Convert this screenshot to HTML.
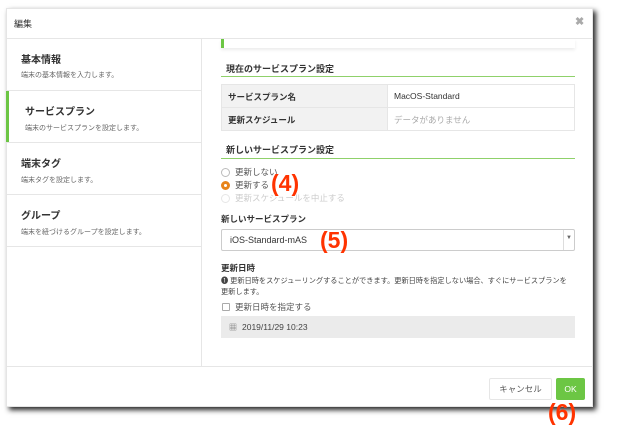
<!DOCTYPE html>
<html><head><meta charset="utf-8"><style>
*{box-sizing:border-box;margin:0;padding:0}
body{width:620px;height:441px;background:#fff;position:relative;font-family:"Liberation Sans","Noto Sans CJK JP",sans-serif;color:#333;overflow:hidden}
.a{position:absolute}
.dlg{left:6px;top:8px;width:587px;height:399px;background:#fff;box-shadow:3px 3px 5px rgba(0,0,0,.85);border:1px solid #e5e5e5}
.t{font-size:10px;font-weight:bold;color:#333}
.d{font-size:7px;color:#666}
.sep{height:1px;background:#e6e6e6}
.sec{font-size:9px;font-weight:bold;color:#333}
.gl{height:1px;background:#8fd16a}
.red{color:#ff3300;font-weight:bold;font-size:23px}
.rad{width:9px;height:9px;border:1px solid #bbb;border-radius:50%;background:#fff}
</style></head><body>
<div class="a dlg"></div>
<div class="a" style="left:14px;top:17px;font-size:9px;color:#333">編集</div>
<div class="a" style="left:575px;top:15px;font-size:11px;color:#aaa;font-weight:bold">✖</div>
<div class="a sep" style="left:7px;top:38px;width:585px"></div>
<div class="a" style="left:201px;top:39px;width:1px;height:327px;background:#e6e6e6"></div>
<!-- sidebar -->
<div class="a t" style="left:21px;top:51px">基本情報</div>
<div class="a d" style="left:21px;top:70px">端末の基本情報を入力します。</div>
<div class="a sep" style="left:7px;top:90px;width:194px"></div>
<div class="a" style="left:6px;top:91px;width:3px;height:51px;background:#6cc644"></div>
<div class="a t" style="left:25px;top:103px">サービスプラン</div>
<div class="a d" style="left:25px;top:123px">端末のサービスプランを設定します。</div>
<div class="a sep" style="left:7px;top:142px;width:194px"></div>
<div class="a t" style="left:21px;top:155px">端末タグ</div>
<div class="a d" style="left:21px;top:175px">端末タグを設定します。</div>
<div class="a sep" style="left:7px;top:194px;width:194px"></div>
<div class="a t" style="left:21px;top:207px">グループ</div>
<div class="a d" style="left:21px;top:227px">端末を紐づけるグループを設定します。</div>
<div class="a sep" style="left:7px;top:246px;width:194px"></div>
<!-- content -->
<div class="a" style="left:221px;top:39px;width:354px;height:9px;background:#fff;box-shadow:0 2px 3px rgba(0,0,0,.08)"></div>
<div class="a" style="left:221px;top:39px;width:3px;height:9px;background:#6cc644"></div>
<div class="a sec" style="left:226px;top:62px">現在のサービスプラン設定</div>
<div class="a gl" style="left:221px;top:76px;width:354px"></div>
<div class="a" style="left:221px;top:84px;width:354px;height:47px;border:1px solid #e6e6e6"></div>
<div class="a" style="left:222px;top:85px;width:166px;height:45px;background:#f2f2f2;border-right:1px solid #e6e6e6"></div>
<div class="a sep" style="left:222px;top:107px;width:352px"></div>
<div class="a sec" style="left:228px;top:91px;font-size:8.5px">サービスプラン名</div>
<div class="a sec" style="left:228px;top:114px;font-size:8.5px">更新スケジュール</div>
<div class="a" style="left:394px;top:91px;font-size:8.5px;color:#333">MacOS-Standard</div>
<div class="a" style="left:394px;top:114px;font-size:8.5px;color:#aaa">データがありません</div>
<div class="a sec" style="left:226px;top:143px">新しいサービスプラン設定</div>
<div class="a gl" style="left:221px;top:158px;width:354px"></div>
<div class="a rad" style="left:221px;top:168px"></div>
<div class="a" style="left:235px;top:166px;font-size:8.5px;color:#555">更新しない</div>
<div class="a rad" style="left:221px;top:181px;border-color:#e8841a;background:#e8841a"><div class="a" style="left:2px;top:2px;width:3px;height:3px;background:#fff;border-radius:50%"></div></div>
<div class="a" style="left:235px;top:179px;font-size:8.5px;color:#555">更新する</div>
<div class="a rad" style="left:221px;top:194px;border-color:#e6e6e6"></div>
<div class="a" style="left:235px;top:192px;font-size:8.5px;color:#ccc">更新スケジュールを中止する</div>
<div class="a red" style="left:271px;top:170px">(4)</div>
<div class="a sec" style="left:221px;top:213px;font-size:8.5px">新しいサービスプラン</div>
<div class="a" style="left:221px;top:229px;width:354px;height:22px;border:1px solid #ccc;border-radius:2px"></div>
<div class="a" style="left:563px;top:230px;width:1px;height:20px;background:#ddd"></div>
<div class="a" style="left:566px;top:235px;font-size:6px;color:#666">▼</div>
<div class="a" style="left:230px;top:235px;font-size:9px;color:#333">iOS-Standard-mAS</div>
<div class="a red" style="left:320px;top:227px">(5)</div>
<div class="a sec" style="left:221px;top:262px;font-size:8.5px">更新日時</div>
<div class="a" style="left:221px;top:275px;font-size:7.2px;color:#444;width:348px;line-height:11px">❶ 更新日時をスケジューリングすることができます。更新日時を指定しない場合、すぐにサービスプランを更新します。</div>
<div class="a" style="left:222px;top:303px;width:8px;height:8px;border:1px solid #aaa;border-radius:1px"></div>
<div class="a" style="left:235px;top:301px;font-size:8.5px;color:#555">更新日時を指定する</div>
<div class="a" style="left:221px;top:316px;width:354px;height:22px;background:#ebebeb"></div>
<div class="a" style="left:229px;top:322px;font-size:8px;color:#666">▦</div>
<div class="a" style="left:242px;top:322px;font-size:8.5px;color:#444">2019/11/29 10:23</div>
<!-- footer -->
<div class="a sep" style="left:7px;top:366px;width:585px"></div>
<div class="a" style="left:489px;top:378px;width:63px;height:22px;border:1px solid #e6e6e6;border-radius:2px;font-size:8.5px;color:#555;text-align:center;line-height:20px">キャンセル</div>
<div class="a" style="left:556px;top:378px;width:29px;height:22px;background:#6cc644;border-radius:2px;font-size:8.5px;color:#fff;text-align:center;line-height:22px">OK</div>
<div class="a red" style="left:548px;top:399px">(6)</div>
</body></html>
